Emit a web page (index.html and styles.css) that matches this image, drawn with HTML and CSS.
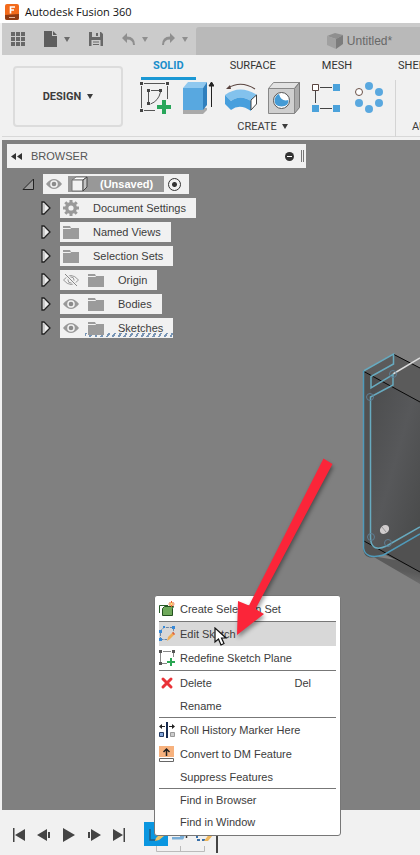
FILE: index.html
```
<!DOCTYPE html>
<html lang="en">
<head>
  <meta charset="UTF-8">
  <meta name="viewport" content="width=device-width, initial-scale=1">
  <title>Autodesk Fusion 360</title>
  <link rel="stylesheet" href="styles.css">
</head>
<body>
  <!-- shared icons -->
  <svg class="sprite" width="0" height="0" aria-hidden="true">
    <symbol id="folder" viewBox="0 0 16 14">
      <path d="M0 1h7l1 2h8v11H0z" fill="#9b9b9b"/>
      <path d="M0 3.500h7.500l1-1" fill="none" stroke="#f1f1f1"/>
    </symbol>
    <symbol id="eye" viewBox="0 0 16 12">
      <path d="M0 6Q8-4 16 6Q8 16 0 6z" fill="#999"/>
      <circle cx="8" cy="6" r="3.800" fill="#f1f1f1"/>
      <circle cx="8" cy="6" r="2.300" fill="#8b8b8b"/>
    </symbol>
    <symbol id="eye-off" viewBox="0 0 16 12">
      <path d="M.5 6Q8-3 15.500 6Q8 15 .5 6z" fill="none" stroke="#999"/>
      <circle cx="8" cy="6" r="3" fill="none" stroke="#999"/>
      <path d="M2 0l12 12" stroke="#f1f1f1" stroke-width="3"/>
      <path d="M2 0l12 12" stroke="#888"/>
    </symbol>
    <symbol id="expand" viewBox="0 0 10 14">
      <path d="M1 1h2l6 6-6 6H1z" fill="#eee" stroke="#222" stroke-width="1.300"/>
      <path d="M3 2.500v9" stroke="#aaa"/>
    </symbol>
    <symbol id="caret" viewBox="0 0 6 5">
      <path d="M0 0h6L3 5z" fill="currentColor"/>
    </symbol>
  </svg>

  <div class="app">
    <header class="title-bar">
      <svg width="14" height="16" viewBox="0 0 14 16">
        <rect width="14" height="16" rx="2" fill="#f26a1b"/>
        <path d="M0 11l14-1v4q0 2-2 2H2q-2 0-2-2z" fill="#8f3a12"/>
        <path d="M5.500 9.500V3H10M5.500 6H9" fill="none" stroke="#fff" stroke-width="1.600"/>
        <path d="M4 13.500h6" stroke="#e5b9a0"/>
      </svg>
      <h1>Autodesk Fusion 360</h1>
    </header>

    <div class="quick-bar">
      <div class="quick-tools">
        <button class="grid-btn" aria-label="Show data panel">
          <svg width="14" height="14" viewBox="0 0 14 14"><path d="M0 0h4v4H0zM5 0h4v4H5zM10 0h4v4h-4zM0 5h4v4H0zM5 5h4v4H5zM10 5h4v4h-4zM0 10h4v4H0zM5 10h4v4H5zM10 10h4v4h-4z" fill="#686868"/></svg>
        </button>
        <button class="file-btn" aria-label="File">
          <svg width="13" height="16" viewBox="0 0 13 16"><path d="M0 0h8v5h5v11H0zM9 0l4 4H9z" fill="#5e5e5e"/></svg>
          <svg width="6" height="5"><use href="#caret"/></svg>
        </button>
        <button class="save-btn" aria-label="Save">
          <svg width="14" height="14" viewBox="0 0 14 14"><path d="M0 0h12l2 2v12H0z" fill="#686868"/><path d="M3 0h8v5H3zM2.500 8h9v6h-9z" fill="#cbcbcb"/><path d="M7 1h2v3H7zM4 9.500h6v1H4zM4 12h6v1H4z" fill="#686868"/></svg>
        </button>
        <button class="undo-btn" aria-label="Undo">
          <svg width="13" height="12" viewBox="0 0 13 12"><path d="M0 5l5-5v3.500q8 0 8 8.500h-2q0-5.500-6-5.500V10z" fill="#8f8f8f"/></svg>
          <svg width="6" height="5"><use href="#caret"/></svg>
        </button>
        <button class="undo-btn" aria-label="Redo">
          <svg width="13" height="12" viewBox="0 0 13 12"><path d="M13 5L8 0v3.500q-8 0-8 8.500h2q0-5.500 6-5.500V10z" fill="#8f8f8f"/></svg>
          <svg width="6" height="5"><use href="#caret"/></svg>
        </button>
      </div>
      <div class="doc-tab">
        <svg width="16" height="16" viewBox="0 0 16 16"><path d="M0 3l8-3 8 2-7 4z" fill="#8f8f8f"/><path d="M0 3l9 3v10l-9-4z" fill="#a0a0a0"/><path d="M9 6l7-4v9l-7 5z" fill="#7c7c7c"/></svg>
        <span>Untitled*</span>
      </div>
    </div>

    <div class="ribbon">
      <button class="design-btn">DESIGN <svg width="6" height="5"><use href="#caret"/></svg></button>
      <div class="ribbon-main">
        <nav class="tabs">
          <a href="#solid" class="active">SOLID</a>
          <a href="#surface">SURFACE</a>
          <a href="#mesh">MESH</a>
          <a href="#sheet">SHEET METAL</a>
        </nav>
        <div class="groups">
          <div class="group">
            <div class="tools">
              <button aria-label="Create Sketch">
                <svg width="32" height="34" viewBox="0 0 32 34">
                  <path d="M2.500 5v22M5 2.500h21M28.500 5v13M5 29.500h11" fill="none" stroke="#555"/>
                  <path d="M9.500 11v10M12 9.500h8M21.500 11q-2 9-10 12" fill="none" stroke="#555"/>
                  <path d="M1 1h3v3H1zM27 1h3v3h-3zM1 28h3v3H1zM8 8h3v3H8zM20 8h3v3h-3zM8 21h3v3H8z" fill="#444"/>
                  <path d="M23 19h4v5h5v4h-5v5h-4v-5h-5v-4h5z" fill="#28a65a"/>
                </svg>
              </button>
              <button aria-label="Extrude">
                <svg width="32" height="34" viewBox="0 0 32 34">
                  <path d="M1 28l5-3 19 2v2l-4 4H1z" fill="#aaa"/>
                  <path d="M1 7l5-6h19l-4 6z" fill="#8fc8ef"/>
                  <path d="M1 7h20v22H1z" fill="#58a8e0"/>
                  <path d="M21 7l4-6v23l-4 5z" fill="#2f7fbd"/>
                  <path d="M29.500 26V4M27 5l2.500-4L32 5z" fill="#222" stroke="#222"/>
                </svg>
              </button>
              <button aria-label="Revolve">
                <svg width="32" height="34" viewBox="0 0 32 34">
                  <path d="M3 7Q16-1 30 8" fill="none" stroke="#5a4540" stroke-width="1.200"/>
                  <path d="M1 8l4-4 1 4z" fill="#5a4540"/>
                  <path d="M0 14Q15 3 32 14l-6 6Q15 13 6 20z" fill="#83c2ed"/>
                  <path d="M0 14l6 6v9l-6-6zM6 20Q15 13 26 20v10Q15 22 6 29z" fill="#479fdd"/>
                  <path d="M26 19l5.500-5v9L26 29z" fill="#fff" stroke="#444"/>
                </svg>
              </button>
              <button aria-label="Hole">
                <svg width="32" height="34" viewBox="0 0 32 34">
                  <path d="M.5 7.500l5-6h26l-5 6z" fill="#e2e2e2" stroke="#888"/>
                  <path d="M26.500 7.500l5-6v25l-5 6z" fill="#aaa" stroke="#777"/>
                  <path d="M.5 7.500h26v25H.5z" fill="#cfcfcf" stroke="#888"/>
                  <circle cx="13.500" cy="19.500" r="8" fill="#fff" stroke="#555"/>
                  <path d="M11 13q2 8 9.500 6q0 6.500-7 6.500t-7-6.500q1-5 4.500-6z" fill="#459bd5"/>
                </svg>
              </button>
              <button aria-label="Rectangular Pattern">
                <svg width="32" height="34" viewBox="0 0 32 34">
                  <path d="M9 6.500h12M4.500 10v12M9 27.500h12" stroke="#444" fill="none"/>
                  <path d="M1.500 3.500h6v6h-6z" fill="#fff" stroke="#5a4540"/>
                  <path d="M22 3h7v7h-7zM1 24h7v7H1zM22 24h7v7h-7z" fill="#4ba2db"/>
                </svg>
              </button>
              <button aria-label="Circular Pattern">
                <svg width="32" height="34" viewBox="0 0 32 34">
                  <g fill="#5aa8df"><circle cx="15" cy="5" r="4"/><circle cx="25" cy="11" r="4"/><circle cx="25" cy="22" r="4"/><circle cx="15" cy="28" r="4"/><circle cx="5" cy="22" r="4"/></g>
                  <circle cx="5" cy="11" r="3.500" fill="#fff" stroke="#6b5148"/>
                </svg>
              </button>
            </div>
            <button class="group-label">CREATE <svg width="6" height="5"><use href="#caret"/></svg></button>
          </div>
          <div class="group next-group">
            <button class="group-label">AUTOMATE</button>
          </div>
        </div>
      </div>
    </div>

    <main class="canvas">
      <section class="browser">
        <div class="browser-head">
          <svg width="11" height="7" viewBox="0 0 11 7"><path d="M5 0v7L0 3.500zM11 0v7L6 3.500z" fill="#333"/></svg>
          <h2>BROWSER</h2>
          <button aria-label="Hide browser"><svg width="9" height="9" viewBox="0 0 9 9"><circle cx="4.500" cy="4.500" r="4.500" fill="#333"/><path d="M2 4.500h5" stroke="#fff"/></svg></button>
          <span class="grip"></span>
        </div>
        <ul class="tree">
          <li class="root">
            <svg width="12" height="12" viewBox="0 0 12 12"><path d="M1 11.500L11.500 1v10.500z" fill="#999" stroke="#222"/></svg>
            <div class="chip">
              <svg width="16" height="12"><use href="#eye"/></svg>
              <div class="selected">
                <svg width="18" height="16" viewBox="0 0 18 16"><path d="M2 4l4-3h11l-4 3z" fill="#fff" stroke="#777"/><path d="M2 4h11v11H2z" fill="#f1f1f1" stroke="#777"/><path d="M13 4l4-3v10l-4 4z" fill="#c4c4c4" stroke="#444"/></svg>
                <span>(Unsaved)</span>
              </div>
              <input type="radio" name="active-component" aria-label="Activate component" checked>
            </div>
          </li>
          <li>
            <svg width="10" height="14"><use href="#expand"/></svg>
            <div class="chip">
              <svg width="16" height="16" viewBox="0 0 16 16"><circle cx="8" cy="8" r="4.300" fill="none" stroke="#999" stroke-width="3.400"/><path d="M8 0v3M8 13v3M0 8h3M13 8h3M2.300 2.300l2 2M11.700 11.700l2 2M2.300 13.700l2-2M11.700 4.300l2-2" stroke="#999" stroke-width="3"/></svg>
              <span>Document Settings</span>
            </div>
          </li>
          <li>
            <svg width="10" height="14"><use href="#expand"/></svg>
            <div class="chip"><svg width="16" height="14"><use href="#folder"/></svg><span>Named Views</span></div>
          </li>
          <li>
            <svg width="10" height="14"><use href="#expand"/></svg>
            <div class="chip"><svg width="16" height="14"><use href="#folder"/></svg><span>Selection Sets</span></div>
          </li>
          <li>
            <svg width="10" height="14"><use href="#expand"/></svg>
            <div class="chip"><svg width="16" height="12"><use href="#eye-off"/></svg><svg class="second" width="16" height="14"><use href="#folder"/></svg><span>Origin</span></div>
          </li>
          <li>
            <svg width="10" height="14"><use href="#expand"/></svg>
            <div class="chip"><svg width="16" height="12"><use href="#eye"/></svg><svg class="second" width="16" height="14"><use href="#folder"/></svg><span>Bodies</span></div>
          </li>
          <li>
            <svg width="10" height="14"><use href="#expand"/></svg>
            <div class="chip hatched"><svg width="16" height="12"><use href="#eye"/></svg><svg class="second" width="16" height="14"><use href="#folder"/></svg><span>Sketches</span></div>
          </li>
        </ul>
      </section>

      <!-- sketched body at the edge of the view -->
      <svg class="model" width="60" height="240" viewBox="360 350 60 240">
        <defs>
          <linearGradient id="face" x1="0" y1="0" x2="1" y2="1"><stop offset="0" stop-color="#4b4c4d"/><stop offset=".5" stop-color="#57585a"/><stop offset="1" stop-color="#484949"/></linearGradient>
          <linearGradient id="shade" x1="0" y1="0" x2="-.3" y2="1"><stop offset=".3" stop-color="#5a5a5a"/><stop offset="1" stop-color="#808080"/></linearGradient>
        </defs>
        <path d="M372 556l48 28v-20z" fill="url(#shade)"/>
        <path d="M363 371l30-17 27 14v204l-36-18q-21 10-21-8z" fill="#515151"/>
        <path d="M371 375l49 27v125l-34 18q-15 6-15-8z" fill="url(#face)"/>
        <path d="M363 371l30-17 27 14v34z" fill="#5b5b5b"/>
        <path d="M393 354l27 14M363 371l57 31M364 541l56 31" fill="none" stroke="#080808"/>
        <path d="M393 374l27-16" stroke="#ddd" stroke-width="1.500"/>
        <path d="M363.500 371l30-17v10L371 376.500V388l22-13.500V385l-22.500 12v140q0 16 16 9L420 527" fill="none" stroke="#68aabf" stroke-width="1.500"/>
        <path d="M363.500 371v177q2 12 20 7l36.500-21" fill="none" stroke="#4f9aba" stroke-width="1.500"/>
        <g fill="none" stroke="#5e7f95"><circle cx="393" cy="374" r="3.500"/><circle cx="370" cy="397" r="3.500"/><circle cx="371" cy="537" r="3.500"/><circle cx="388" cy="543" r="3.500"/></g>
        <ellipse cx="384.500" cy="529.500" rx="5" ry="4" fill="#d0cccd" transform="rotate(-40 384.500 529.500)"/>
        <path d="M382 527l4 5" stroke="#999"/>
      </svg>
    </main>

    <footer class="timeline">
      <div class="playback">
        <button aria-label="Go to beginning"><svg width="14" height="14" viewBox="0 0 14 14"><path d="M1 0h1.500v14H1zM13 1v12L3 7z" fill="#444"/></svg></button>
        <button aria-label="Step back"><svg width="14" height="14" viewBox="0 0 14 14"><path d="M10 1v12L0 7zM11 4h2v6h-2z" fill="#444"/></svg></button>
        <button aria-label="Play"><svg width="14" height="14" viewBox="0 0 14 14"><path d="M1 0v14l12-7z" fill="#444"/></svg></button>
        <button aria-label="Step forward"><svg width="14" height="14" viewBox="0 0 14 14"><path d="M4 1v12l10-6zM1 4h2v6H1z" fill="#444"/></svg></button>
        <button aria-label="Go to end"><svg width="14" height="14" viewBox="0 0 14 14"><path d="M1 1v12l10-6zM11.500 0H13v14h-1.500z" fill="#444"/></svg></button>
      </div>
      <svg class="features" width="76" height="32" viewBox="0 0 76 32">
        <rect width="24" height="24" fill="#0a96e0"/>
        <path d="M6 7v11h7" fill="none" stroke="#235c80" stroke-width="1.500"/>
        <path d="M11 19l1-3 5-5 3 3-5 4z" fill="#ecc267"/>
        <path d="M28 9h11q3 5 0 8.500H28V15h8v-2h-8z" fill="#79aed8"/><path d="M42.500 9v7" stroke="#333" stroke-width="1.500"/>
        <path d="M53 8v10h9" fill="none" stroke="#386fa8" stroke-dasharray="3 2" stroke-width="2"/>
        <path d="M60 19l6-8 3 2-5 6z" fill="#eeb65c"/>
        <path d="M12.500 24v5.500h48V24M36.500 24v5" fill="none" stroke="#bbb"/>
        <path d="M72 13h2v18h-2z" fill="#444"/>
      </svg>
    </footer>

    <div class="context-menu" role="menu">
      <button role="menuitem">
        <svg width="16" height="16" viewBox="0 0 16 16"><path d="M.5 12V4.500H9" fill="none" stroke="#285c28"/><path d="M3.500 7.500l2-2h9l-1 2v7h-10z" fill="#6fa95b" stroke="#24511f"/><path d="M12.500 0v6M9.500 3h6M10.500 1l4 4M14.500 1l-4 4" stroke="#e65a20"/><circle cx="12.500" cy="3" r="1.200" fill="#ffe27a"/></svg>
        <span>Create Selection Set</span>
      </button>
      <hr>
      <button role="menuitem" class="hover">
        <svg width="16" height="16" viewBox="0 0 16 16"><path d="M1.500 14V4.500L5 1.500h9.500V8M1.500 13.500H8" fill="none" stroke="#6c86a5" stroke-dasharray="3 1"/><path d="M0 4h3v3H0zM4 0h2v2H4zM13 0h3v3h-3zM0 12h3v3H0z" fill="#3689d8"/><path d="M8 15l1-4 5-5 2 2-5 5z" fill="#efad57"/><path d="M13 7l1-1 2 2-1 1z" fill="#e15c44"/></svg>
        <span>Edit Sketch</span>
      </button>
      <button role="menuitem">
        <svg width="16" height="16" viewBox="0 0 16 16"><path d="M1.500 3v10M4 1.500h8M14.500 3v4M3 13.500h5" fill="none" stroke="#888"/><path d="M0 0h3v3H0zM13 0h3v3h-3zM0 12h3v3H0z" fill="#555"/><path d="M11 8h2v3h3v2h-3v3h-2v-3H8v-2h3z" fill="#2aa653"/></svg>
        <span>Redefine Sketch Plane</span>
      </button>
      <hr>
      <button role="menuitem">
        <svg width="16" height="16" viewBox="0 0 16 16"><path d="M4 4l8 8M12 4l-8 8" stroke="#e93338" stroke-width="3" stroke-linecap="round"/></svg>
        <span>Delete</span><kbd>Del</kbd>
      </button>
      <button role="menuitem" class="plain"><span>Rename</span></button>
      <hr>
      <button role="menuitem">
        <svg width="16" height="16" viewBox="0 0 16 16"><path d="M7 0h2v16H7z" fill="#172b50"/><path d="M1 4.500h5M10 4.500h5" stroke="#222"/><path d="M0 4.500L3 2v5zM16 4.500L13 2v5z" fill="#222"/><path d="M.5 10.500h4v4h-4z" fill="#86a9dd" stroke="#263d65"/><path d="M11.500 10.500h4v4h-4z" fill="#ccc" stroke="#999"/></svg>
        <span>Roll History Marker Here</span>
      </button>
      <button role="menuitem">
        <svg width="16" height="16" viewBox="0 0 16 16"><path d="M0 0h15v11H0z" fill="#f7b27e"/><path d="M7.500 10V4M4.500 6l3-3 3 3" fill="none" stroke="#222" stroke-width="1.500"/><path d="M.5 12.500h14v3H.5z" fill="#fff" stroke="#666"/></svg>
        <span>Convert to DM Feature</span>
      </button>
      <button role="menuitem" class="plain"><span>Suppress Features</span></button>
      <hr>
      <button role="menuitem" class="plain"><span>Find in Browser</span></button>
      <button role="menuitem" class="plain"><span>Find in Window</span></button>
      <svg class="cursor" width="14" height="20" viewBox="0 0 14 20"><path d="M1 1v14l3.500-3 2.500 6 3-1.500L7.500 11H12z" fill="#fff" stroke="#111" stroke-width="1.200"/></svg>
      <svg class="pointer" width="110" height="190" viewBox="230 455 110 190"><path d="M323.500 458.500l9 5.500L255.500 609l8.500 5-27 21 1-34 11 4.500z" fill="#fb2539"/></svg>
    </div>
  </div>
</body>
</html>
```
FILE: styles.css
```
* {
  box-sizing: border-box;
}

body {
  margin: 0;
  font-family: "Liberation Sans", Arial, sans-serif;
  font-size: 11px;
  color: #3c3c3c;
  background-color: #f1f1f1;
}

button {
  display: flex;
  align-items: center;
  padding: 0;
  border: none;
  background: none;
  font: inherit;
  color: inherit;
  cursor: pointer;
}

svg {
  display: block;
  flex: none;
}

h1, h2 {
  margin: 0;
  font-size: 11px;
  font-weight: normal;
}

.sprite {
  position: absolute;
}

.app {
  position: relative;
  display: flex;
  flex-direction: column;
  min-height: 100vh;
  padding-left: 2px;
  overflow: hidden;
}

/* Title and quick access bars */
.title-bar {
  display: flex;
  align-items: center;
  gap: 6px;
  height: 23px;
  margin-left: -2px;
  padding-left: 5px;
  background-color: #fff;
}

.title-bar h1 {
  font-family: "Open Sans", "Segoe UI", sans-serif;
  font-size: 11px;
  color: #111;
}

.quick-bar {
  display: flex;
  height: 32px;
  padding-top: 4px;
  background-color: #cbcbcb;
}

.quick-tools {
  display: flex;
  align-items: center;
  width: 194px;
  padding: 0 9px 4px;
  color: #6b6b6b;
}

.file-btn {
  gap: 7px;
  margin-left: 19px;
}

.save-btn {
  margin-left: 19px;
}

.undo-btn {
  gap: 7px;
  margin-left: 19px;
  color: #8f8f8f;
}

.undo-btn + .undo-btn {
  margin-left: 14px;
}

.doc-tab {
  display: flex;
  flex: 1;
  align-items: center;
  justify-content: center;
  gap: 4px;
  padding-left: 103px;
  border-radius: 3px 0 0 0;
  background-color: #b9b9b9;
  font-size: 12px;
  color: #686868;
}

/* Ribbon */
.ribbon {
  display: flex;
  height: 85px;
  border-bottom: 3px solid #f1f1f1;
  overflow: hidden;
  font-family: Roboto, sans-serif;
  background-color: #f1f1f1;
  box-shadow: inset 0 -1px #d8d8d8;
}

.design-btn {
  flex: none;
  justify-content: center;
  gap: 6px;
  width: 110px;
  height: 61px;
  margin: 11px 16px 0 11px;
  border: 2px solid #dcdcdc;
  border-radius: 4px;
  font-weight: bold;
}

.ribbon-main {
  flex: none;
}

.tabs {
  display: flex;
  gap: 22px;
  padding-left: 2px;
}

.tabs a {
  padding: 0 12px;
  border-bottom: 3px solid transparent;
  line-height: 22px;
  color: #333;
  text-decoration: none;
}

.tabs .active {
  border-color: #1b98d4;
  font-weight: bold;
  color: #1b8ecb;
}

.groups {
  display: flex;
}

.group {
  display: flex;
  flex-direction: column;
  align-items: center;
  justify-content: flex-end;
  padding-top: 1px;
}

.tools {
  display: flex;
  gap: 11px;
}

.group-label {
  gap: 5px;
  height: 22px;
}

.next-group {
  margin-left: 9px;
  padding-left: 16px;
  border-left: 1px solid #d4d4d4;
}

/* Canvas and browser tree */
.canvas {
  position: relative;
  flex: 1;
  padding: 4px 5px;
  background-color: #808080;
}

.browser-head {
  display: flex;
  align-items: center;
  max-width: 299px;
  height: 24px;
  padding: 0 2px 0 4px;
  background-color: #f1f1f1;
  color: #555;
}

.browser-head h2 {
  flex: 1;
  margin-left: 9px;
}

.grip {
  width: 3px;
  height: 12px;
  margin-left: 7px;
  border: 1px solid #777;
  border-width: 0 1px;
}

.tree {
  display: flex;
  flex-direction: column;
  gap: 4px;
  margin: 6px 0 0;
  padding: 0;
  list-style: none;
}

.tree li {
  display: flex;
  align-items: center;
  gap: 9px;
  padding-left: 34px;
}

.tree .root {
  padding-left: 15px;
}

.chip {
  display: flex;
  align-items: center;
  height: 20px;
  padding: 0 10px 0 3px;
  background-color: #f1f1f1;
}

.chip span {
  margin-left: 14px;
}

.chip .second {
  margin-left: 9px;
}

.root .chip {
  padding-right: 8px;
}

.selected {
  display: flex;
  align-items: center;
  height: 16px;
  margin: 0 4px 0 6px;
  padding: 0 11px 0 2px;
  background-color: #989898;
  font-weight: bold;
  color: #fff;
}

.chip .selected span {
  margin-left: 12px;
}

.chip input {
  appearance: none;
  width: 13px;
  height: 13px;
  margin: 0;
  border: 1px solid #333;
  border-radius: 50%;
  background: radial-gradient(circle, #333 2px, #f1f1f1 3px);
}

.hatched {
  background-image: repeating-linear-gradient(120deg, #7895b5 0 2px, #f1f1f1 2px 5px);
  background-repeat: no-repeat;
  background-position: 25px 15px;
  background-size: 88px 4px;
}

.model {
  position: absolute;
  top: 210px;
  right: 0;
}

/* Timeline */
.timeline {
  display: flex;
  height: 45px;
  padding: 12px 10px 0;
}

.playback {
  display: flex;
  gap: 11px;
  height: 26px;
}

.features {
  margin-left: 18px;
}

/* Context menu */
.context-menu {
  position: absolute;
  bottom: 19px;
  left: 154px;
  width: 187px;
  padding: 1px 4px 2px;
  border: 1px solid #777;
  border-radius: 3px;
  background-color: #fff;
}

.context-menu button {
  gap: 5px;
  width: 100%;
  height: 24px;
  text-align: left;
}

.context-menu .plain {
  height: 22px;
  padding-left: 21px;
}

.context-menu .hover {
  background-color: #d8d8d8;
}

.context-menu hr {
  height: 1px;
  margin: 0;
  border: none;
  background-color: #777;
}

.context-menu kbd {
  margin: 0 25px 0 auto;
  font: inherit;
}

.cursor {
  position: absolute;
  top: 31px;
  left: 59px;
}

.pointer {
  position: absolute;
  top: -141px;
  left: 75px;
  filter: drop-shadow(1px 3px 2px rgba(0, 0, 0, 0.4));
}
```
